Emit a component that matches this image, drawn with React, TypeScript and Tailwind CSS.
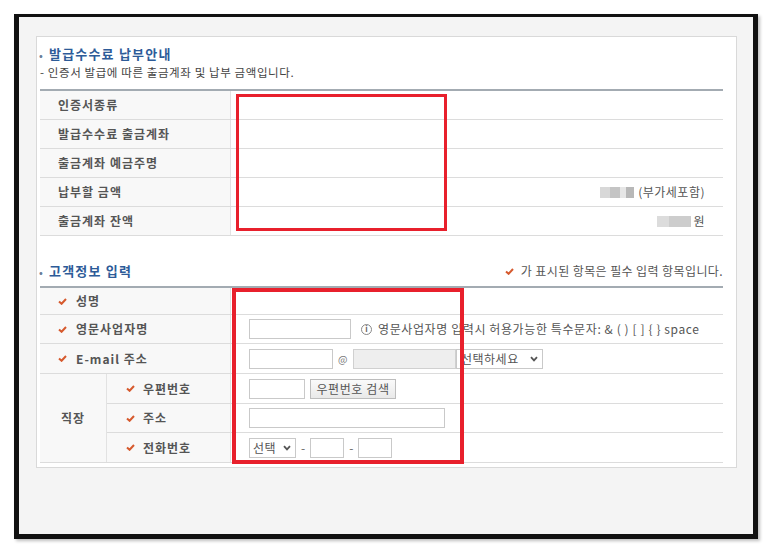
import React from 'react';

const Check: React.FC = () => (
    <svg width="9" height="7" viewBox="0 0 9 7" className="shrink-0">
        <path d="M1 3.4 L3.6 5.8 L8 1" fill="none" stroke="#d65a2e" strokeWidth="2" />
    </svg>
);

const Chevron: React.FC = () => (
    <svg width="8" height="6" viewBox="0 0 8 6" className="shrink-0">
        <path d="M1 1.2 L4 4.4 L7 1.2" fill="none" stroke="#555" strokeWidth="1.8" />
    </svg>
);

const Blur: React.FC<{ w: number; shade: string }> = ({ w, shade }) => (
    <span className={`inline-block h-[11px] blur-[0.6px] ${shade}`} style={{ width: w }} />
);

interface InfoRow {
    label: string;
    value?: React.ReactNode;
}

const payRows: InfoRow[] = [
    { label: '인증서종류' },
    { label: '발급수수료 출금계좌' },
    { label: '출금계좌 예금주명' },
    {
        label: '납부할 금액',
        value: (
            <span className="flex items-center">
                <Blur w={10} shade="bg-[#d8d8d8]" />
                <Blur w={10} shade="bg-[#c4c4c4]" />
                <Blur w={6} shade="bg-[#e6e6e6]" />
                <Blur w={8} shade="bg-[#b8b8b8]" />
                <span className="ml-[4px]">(부가세포함)</span>
            </span>
        ),
    },
    {
        label: '출금계좌 잔액',
        value: (
            <span className="flex items-center">
                <Blur w={12} shade="bg-[#dcdcdc]" />
                <Blur w={22} shade="bg-[#cdcdcd]" />
                <span className="ml-[2px]">원</span>
            </span>
        ),
    },
];

const inputCls = 'h-[20px] border border-[#c9c9c9] bg-white';
const labelCls = 'flex items-center border-r border-[#e2e2e2] bg-[#f8f8f8] font-bold tracking-[1px] text-[#555]';

const App: React.FC = () => {
    return (
        <div
            className="h-[555px] w-[773px] overflow-hidden bg-white pl-[14px] pt-[14px] text-[12px] text-[#444]"
            style={{ fontFamily: '"Noto Sans CJK KR", "Noto Sans", sans-serif' }}
        >
            {/* Frame */}
            <div className="h-[525px] w-[744px] border-b-[5px] border-l-[5px] border-r-[5px] border-t-[3px] border-[#111] bg-[#f4f4f4] pl-[17px] pt-[19px] shadow-[2px_2px_3px_rgba(0,0,0,0.25)]">
                {/* Panel */}
                <div className="relative h-[432px] w-[701px] border border-[#d9d9d9] bg-white pl-[3px] pr-[13px]">
                    {/* Section 1 title */}
                    <div className="mt-[8px] flex h-[18px] items-center text-[13px] font-bold tracking-[1.2px] text-[#2d5b98]">
                        <span className="mr-[5px] ml-[-1px] text-[10px] text-[#6b7f99]">•</span>
                        발급수수료 납부안내
                    </div>
                    <div className="mt-[2px] flex h-[16px] items-center text-[11.5px] tracking-[0.6px] text-[#444]">
                        - 인증서 발급에 따른 출금계좌 및 납부 금액입니다.
                    </div>

                    {/* Table 1 */}
                    <div className="mt-[8px] border-t-2 border-[#a3abb2]">
                        {payRows.map((row) => (
                            <div key={row.label} className="flex h-[29px] border-b border-[#dcdcdc]">
                                <div className={`${labelCls} w-[191px] pl-[18px]`}>{row.label}</div>
                                <div className="flex flex-1 items-center justify-end pr-[18px] tracking-[0.5px] text-[#555]">
                                    {row.value}
                                </div>
                            </div>
                        ))}
                    </div>

                    {/* Section 2 title */}
                    <div className="mt-[26px] flex h-[18px] items-center justify-between">
                        <div className="flex items-center text-[13px] font-bold tracking-[1.2px] text-[#2d5b98]">
                            <span className="mr-[5px] ml-[-1px] text-[10px] text-[#6b7f99]">•</span>
                            고객정보 입력
                        </div>
                        <div className="flex items-center gap-[7px] tracking-[0.4px] text-[#555]">
                            <Check />
                            가 표시된 항목은 필수 입력 항목입니다.
                        </div>
                    </div>

                    {/* Table 2 */}
                    <div className="mt-[6px] border-t-2 border-[#a3abb2]">
                        <div className="flex h-[27px] border-b border-[#dcdcdc]">
                            <div className={`${labelCls} w-[191px] gap-[9px] pl-[18px]`}>
                                <Check />
                                성명
                            </div>
                            <div className="flex-1" />
                        </div>
                        <div className="flex h-[29px] border-b border-[#dcdcdc]">
                            <div className={`${labelCls} w-[191px] gap-[9px] pl-[18px]`}>
                                <Check />
                                영문사업자명
                            </div>
                            <div className="flex flex-1 items-center pl-[18px] tracking-[0.6px] text-[#555]">
                                <div className={`${inputCls} w-[102px]`} />
                                <span className="ml-[10px] mr-[6px] flex h-[11px] w-[11px] items-center justify-center rounded-full border border-[#888] text-[8px] font-bold leading-none tracking-normal text-[#666]">
                                    i
                                </span>
                                영문사업자명 입력시 허용가능한 특수문자: &amp; ( ) [ ] {'{'} {'}'} space
                            </div>
                        </div>
                        <div className="flex h-[30px] border-b border-[#dcdcdc]">
                            <div className={`${labelCls} w-[191px] gap-[9px] pl-[18px]`}>
                                <Check />
                                E-mail 주소
                            </div>
                            <div className="flex flex-1 items-center pl-[18px] tracking-[0.5px] text-[#555]">
                                <div className={`${inputCls} w-[84px]`} />
                                <span className="mx-[5px] text-[10px] text-[#777]">@</span>
                                <div className="h-[20px] w-[103px] border border-[#d0d0d0] bg-[#eeeeee]" />
                                <div className="flex h-[20px] w-[87px] items-center justify-between border border-[#c9c9c9] bg-white pl-[4px] pr-[4px]">
                                    선택하세요
                                    <Chevron />
                                </div>
                            </div>
                        </div>
                        <div className="flex border-b border-[#dcdcdc]">
                            <div className={`${labelCls} w-[67px] justify-center`}>직장</div>
                            <div className="flex-1">
                                <div className="flex h-[30px] border-b border-[#dcdcdc]">
                                    <div className={`${labelCls} w-[124px] gap-[8px] pl-[19px]`}>
                                        <Check />
                                        우편번호
                                    </div>
                                    <div className="flex flex-1 items-center gap-[5px] pl-[18px]">
                                        <div className={`${inputCls} w-[56px]`} />
                                        <div className="flex h-[20px] w-[86px] items-center justify-center border border-[#bdbdbd] bg-gradient-to-b from-[#fafafa] to-[#e9e9e9] tracking-[0.6px] text-[#555]">
                                            우편번호 검색
                                        </div>
                                    </div>
                                </div>
                                <div className="flex h-[29px] border-b border-[#dcdcdc]">
                                    <div className={`${labelCls} w-[124px] gap-[8px] pl-[19px]`}>
                                        <Check />
                                        주소
                                    </div>
                                    <div className="flex flex-1 items-center pl-[18px]">
                                        <div className={`${inputCls} w-[196px]`} />
                                    </div>
                                </div>
                                <div className="flex h-[29px]">
                                    <div className={`${labelCls} w-[124px] gap-[8px] pl-[19px]`}>
                                        <Check />
                                        전화번호
                                    </div>
                                    <div className="flex flex-1 items-center pl-[18px] text-[#666]">
                                        <div className="flex h-[20px] w-[47px] items-center justify-between border border-[#c9c9c9] bg-white pl-[3px] pr-[4px] tracking-[0.5px] text-[#555]">
                                            선택
                                            <Chevron />
                                        </div>
                                        <span className="mx-[5px]">-</span>
                                        <div className={`${inputCls} w-[34px]`} />
                                        <span className="mx-[5px]">-</span>
                                        <div className={`${inputCls} w-[34px]`} />
                                    </div>
                                </div>
                            </div>
                        </div>
                    </div>

                    {/* Red annotation boxes */}
                    <div className="pointer-events-none absolute left-[199px] top-[57px] h-[137px] w-[211px] border-[3px] border-[#e8202c]" />
                    <div className="pointer-events-none absolute left-[195px] top-[251px] h-[176px] w-[232px] border-[4px] border-[#e8202c]" />
                </div>
            </div>
        </div>
    );
};

export default App;
